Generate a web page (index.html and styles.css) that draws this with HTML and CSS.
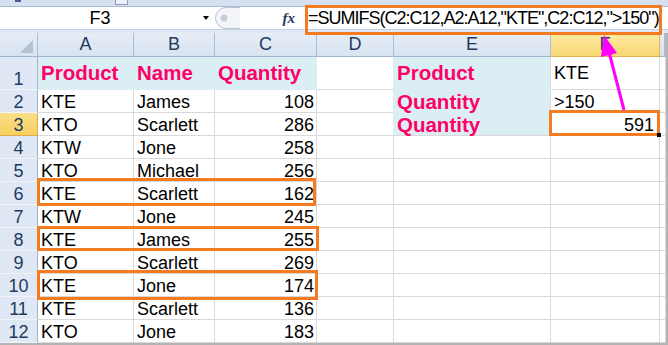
FILE: index.html
```html
<!DOCTYPE html>
<html lang="en">

<head>
    <meta charset="UTF-8">
    <meta name="viewport" content="width=device-width, initial-scale=1.0">
    <title>SUMIFS</title>
    <link rel="stylesheet" href="styles.css">
</head>

<body>
    <div class="excel">
        <div class="ribbon">
            <span class="rb-icon"></span>
            <span class="rb-box"></span>
        </div>
        <div class="fbar">
            <div class="namebox">
                <span class="name">F3</span>
                <span class="drop"></span>
            </div>
            <div class="knob">
                <svg width="27" height="22" viewBox="0 0 27 22">
                    <rect x="2.5" y="0.5" width="40" height="21" rx="10.5" fill="#f3f5f8" stroke="#b9c3d0" />
                    <circle cx="11" cy="11" r="3.5" fill="#c9ced6" />
                </svg>
            </div>
            <div class="fx">fx</div>
            <div class="formula">=SUMIFS(C2:C12,A2:A12,"KTE",C2:C12,"&gt;150")</div>
        </div>
        <div class="gap"></div>

        <div class="sheet">
            <!-- column headers -->
            <div class="ch corner"><span class="tri"></span></div>
            <div class="ch">A</div>
            <div class="ch">B</div>
            <div class="ch">C</div>
            <div class="ch">D</div>
            <div class="ch">E</div>
            <div class="ch sel">F</div>
            <div class="ch"></div>

            <!-- row 1 -->
            <div class="rh">1</div>
            <div class="c hd fill mid">Product</div>
            <div class="c hd fill mid">Name</div>
            <div class="c hd fill mid">Quantity</div>
            <div class="c nextfill"></div>
            <div class="c hd fill mid keep">Product</div>
            <div class="c mid">KTE</div>
            <div class="c"></div>

            <!-- row 2 -->
            <div class="rh">2</div>
            <div class="c">KTE</div>
            <div class="c">James</div>
            <div class="c num">108</div>
            <div class="c nextfill"></div>
            <div class="c hd fill keep">Quantity</div>
            <div class="c">&gt;150</div>
            <div class="c"></div>

            <!-- row 3 -->
            <div class="rh sel">3</div>
            <div class="c">KTO</div>
            <div class="c">Scarlett</div>
            <div class="c num">286</div>
            <div class="c nextfill"></div>
            <div class="c hd fill last">Quantity</div>
            <div class="c num result">591</div>
            <div class="c"></div>

            <div class="rh">4</div>
            <div class="c">KTW</div>
            <div class="c">Jone</div>
            <div class="c num">258</div>
            <div class="c"></div>
            <div class="c"></div>
            <div class="c"></div>
            <div class="c"></div>

            <div class="rh">5</div>
            <div class="c">KTO</div>
            <div class="c">Michael</div>
            <div class="c num">256</div>
            <div class="c"></div>
            <div class="c"></div>
            <div class="c"></div>
            <div class="c"></div>

            <div class="rh">6</div>
            <div class="c">KTE</div>
            <div class="c">Scarlett</div>
            <div class="c num">162</div>
            <div class="c"></div>
            <div class="c"></div>
            <div class="c"></div>
            <div class="c"></div>

            <div class="rh">7</div>
            <div class="c">KTW</div>
            <div class="c">Jone</div>
            <div class="c num">245</div>
            <div class="c"></div>
            <div class="c"></div>
            <div class="c"></div>
            <div class="c"></div>

            <div class="rh">8</div>
            <div class="c">KTE</div>
            <div class="c">James</div>
            <div class="c num">255</div>
            <div class="c"></div>
            <div class="c"></div>
            <div class="c"></div>
            <div class="c"></div>

            <div class="rh">9</div>
            <div class="c">KTO</div>
            <div class="c">Scarlett</div>
            <div class="c num">269</div>
            <div class="c"></div>
            <div class="c"></div>
            <div class="c"></div>
            <div class="c"></div>

            <div class="rh">10</div>
            <div class="c">KTE</div>
            <div class="c">Jone</div>
            <div class="c num">174</div>
            <div class="c"></div>
            <div class="c"></div>
            <div class="c"></div>
            <div class="c"></div>

            <div class="rh">11</div>
            <div class="c">KTE</div>
            <div class="c">Scarlett</div>
            <div class="c num">136</div>
            <div class="c"></div>
            <div class="c"></div>
            <div class="c"></div>
            <div class="c"></div>

            <div class="rh">12</div>
            <div class="c">KTO</div>
            <div class="c">Jone</div>
            <div class="c num">183</div>
            <div class="c"></div>
            <div class="c"></div>
            <div class="c"></div>
            <div class="c"></div>
        </div>

        <!-- orange marks drawn over the sheet -->
        <div class="mark m-formula"></div>
        <div class="mark m-row6"></div>
        <div class="mark m-row8"></div>
        <div class="mark m-row10"></div>
        <div class="mark m-f3"></div>
        <div class="handle"></div>

        <svg class="arrow" width="668" height="345" viewBox="0 0 668 345">
            <line x1="624" y1="110" x2="609" y2="52" stroke="#ff00ff" stroke-width="3" />
            <polygon points="604,35 601,57 617,53" fill="#ff00ff" />
        </svg>
    </div>
</body>

</html>
```

FILE: styles.css
```css
* {
    box-sizing: border-box;
}

body {
    margin: 0;
    font-family: "Liberation Sans", Arial, sans-serif;
}

.excel {
    position: relative;
    width: 668px;
    height: 345px;
    overflow: hidden;
    background: #fff;
}

/* ribbon edge + formula bar */
.ribbon {
    height: 7px;
    display: flex;
    align-items: flex-start;
    background: #d5e1f0;
    border-bottom: 1px solid #a9bbd2;
}

.rb-icon {
    width: 6px;
    height: 2px;
    margin-left: 15px;
    background: #5b4f91;
}

.rb-box {
    width: 13px;
    height: 5px;
    margin-left: 94px;
    background: #eef2f8;
    border: 1px solid #8d9cb2;
    border-top: 0;
}

.fbar {
    height: 23px;
    display: flex;
    background: #fff;
    border-bottom: 1px solid #c5d2e3;
}

.namebox {
    width: 213px;
    display: flex;
    align-items: center;
}

.name {
    width: 200px;
    text-align: center;
    font-size: 18px;
}

.drop {
    width: 0;
    height: 0;
    margin-left: 3px;
    border-left: 3.5px solid transparent;
    border-right: 3.5px solid transparent;
    border-top: 4px solid #000;
}

.knob {
    width: 27px;
    display: flex;
    align-items: center;
}

.fx {
    width: 65px;
    display: flex;
    align-items: center;
    justify-content: flex-end;
    padding-right: 10px;
    font-family: "Liberation Serif", serif;
    font-style: italic;
    font-weight: bold;
    font-size: 15px;
    color: #1f3a5f;
}

.formula {
    flex: 1;
    display: flex;
    align-items: center;
    padding-left: 3px;
    font-size: 18px;
    letter-spacing: -1px;
    white-space: nowrap;
}

.gap {
    height: 3px;
    background: #dfe8f4;
}

/* grid */
.sheet {
    display: grid;
    grid-template-columns: 38px 96px 81px 102px 77px 157px 109px 5px;
    grid-template-rows: 24px 33px repeat(11, 23px);
    width: 668px;
    border-right: 3px solid #b4b4b4;
    border-bottom: 2px solid #b4b4b4;
}

.ch {
    display: flex;
    align-items: center;
    justify-content: center;
    font-size: 18px;
    color: #1f3a5f;
    background: linear-gradient(#e6edf7, #d8e3f1);
    border-right: 1px solid #a9bdd4;
    border-bottom: 1px solid #9eb6ce;
}

.ch.sel {
    background: linear-gradient(#fdeba3, #f9d874);
    border-right-color: #e2b44f;
    border-bottom-color: #e2b44f;
}

.corner {
    justify-content: flex-end;
    align-items: flex-end;
    padding: 0 4px 3px 0;
}

.tri {
    width: 0;
    height: 0;
    border-left: 13px solid transparent;
    border-bottom: 13px solid #b3c1d5;
}

.rh {
    display: flex;
    align-items: flex-end;
    justify-content: center;
    padding-bottom: 1px;
    font-size: 18px;
    line-height: 1;
    color: #1f3a5f;
    background: #dfe8f4;
    border-right: 1px solid #9eb6ce;
    border-bottom: 1px solid #f1f5fa;
}

.rh.sel {
    background: linear-gradient(#fae08a, #f6cf5f);
    border-right-color: #dfad46;
    border-bottom-color: #dfad46;
}

.c {
    display: flex;
    align-items: flex-end;
    padding: 0 2px 1px 3px;
    font-size: 18px;
    line-height: 1;
    white-space: nowrap;
    border-right: 1px solid #d9d9d9;
    border-bottom: 1px solid #d9d9d9;
}

.c.mid {
    align-items: center;
    padding-bottom: 0;
}

.num {
    justify-content: flex-end;
}

.result {
    padding-right: 5px;
}

.hd {
    color: #ff0066;
    font-weight: bold;
    font-size: 20.5px;
    padding-bottom: 0;
}

.fill {
    background: #daeef3;
    border-right-color: #daeef3;
    border-bottom-color: #daeef3;
}

.fill.keep {
    border-right-color: #d9d9d9;
}

.fill.last {
    border-right-color: #d9d9d9;
    border-bottom-color: #d9d9d9;
}

.nextfill {
    border-right-color: #daeef3;
}

/* overlays */
.mark {
    position: absolute;
    border: 3px solid #f47b20;
}

.m-formula {
    left: 305px;
    top: 5px;
    width: 357px;
    height: 30px;
}

.m-row6 {
    left: 37px;
    top: 178px;
    width: 279px;
    height: 28px;
}

.m-row8 {
    left: 37px;
    top: 226px;
    width: 282px;
    height: 25px;
}

.m-row10 {
    left: 37px;
    top: 270px;
    width: 281px;
    height: 30px;
}

.m-f3 {
    left: 549px;
    top: 110px;
    width: 111px;
    height: 26px;
}

.handle {
    position: absolute;
    left: 657px;
    top: 133px;
    width: 4px;
    height: 4px;
    background: #000;
}

.arrow {
    position: absolute;
    left: 0;
    top: 0;
}
```
